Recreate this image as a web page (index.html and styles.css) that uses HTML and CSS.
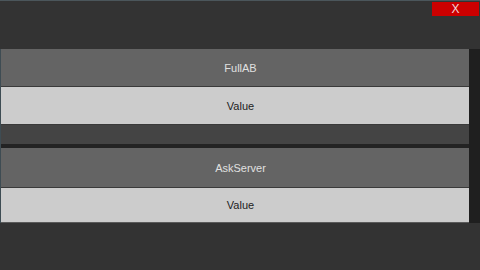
FILE: index.html
```html
<!DOCTYPE html>
<html lang="en">

<head>
    <meta charset="UTF-8">
    <meta name="viewport" content="width=device-width, initial-scale=1.0">
    <title>Settings Panel</title>
    <link rel="stylesheet" href="styles.css">
</head>

<body>
    <div class="window">
        <div class="title-bar">
            <button class="close-btn" type="button">X</button>
        </div>

        <div class="main">
            <div class="list">
                <div class="panel">
                    <div class="row row-header">FullAB</div>
                    <div class="row row-value">Value</div>
                    <div class="panel-foot"></div>
                </div>

                <div class="panel panel-second">
                    <div class="row row-header tall">AskServer</div>
                    <div class="row row-value short">Value</div>
                </div>
            </div>
            <div class="scrollbar"></div>
        </div>
    </div>
</body>

</html>
```

FILE: styles.css
```css
/* General Styles */
body {
    margin: 0;
    padding: 0;
    background-color: #333333;
    font-family: "Liberation Sans", Arial, sans-serif;
}

.window {
    width: 480px;
    height: 270px;
    border-top: 1px solid #4b565b;
    box-sizing: border-box;
    overflow: hidden;
}

/* Title Bar */
.title-bar {
    height: 48px;
    display: flex;
    justify-content: flex-end;
    align-items: flex-start;
}

.close-btn {
    width: 47px;
    height: 14px;
    margin: 1px 1px 0 0;
    padding: 0;
    border: none;
    background-color: #cc0000;
    color: #f2d6d6;
    font-family: "Liberation Sans", Arial, sans-serif;
    font-size: 12px;
    line-height: 14px;
    cursor: pointer;
}

/* Main List */
.main {
    display: flex;
}

.list {
    flex: 1;
    border-left: 1px solid #3e4c53;
}

.scrollbar {
    width: 11px;
    height: 174px;
    background-color: #1f1f1f;
}

.panel {
    background-color: #444444;
}

.panel-second {
    border-top: 4px solid #232323;
}

.row {
    height: 37px;
    padding-left: 11px;
    display: flex;
    align-items: center;
    justify-content: center;
    font-size: 11px;
}

.row-header {
    background-color: #646464;
    color: #e0e0e0;
    border-bottom: 1px solid #3a3a3a;
}

.row-value {
    background-color: #cccccc;
    color: #222222;
    border-bottom: 1px solid #3a3a3a;
}

.row.tall {
    height: 39px;
}

.row.short {
    height: 34px;
    border-bottom: 1px solid #5a5a5a;
}

.panel-foot {
    height: 19px;
}
```
